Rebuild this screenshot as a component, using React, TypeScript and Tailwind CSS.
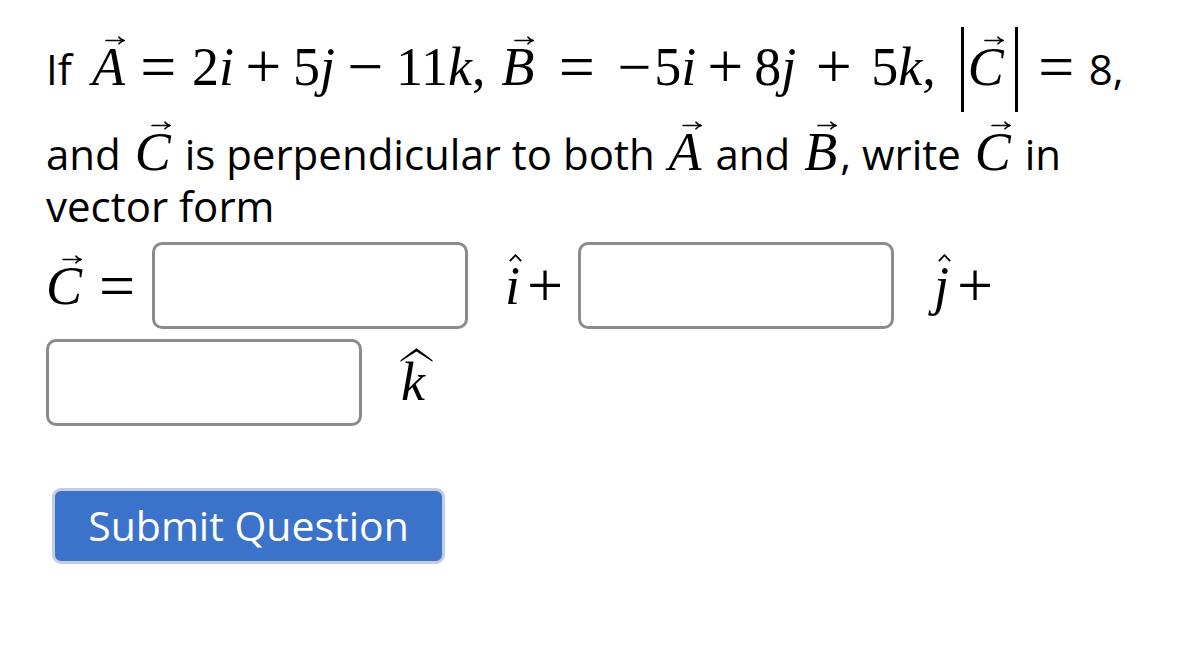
import React from 'react';

const TEXT = "font-['Open_Sans',sans-serif]";
const MATH = "font-['Liberation_Serif','Times_New_Roman',serif]";

function Arrow() {
  return (
    <svg
      className="absolute right-0 top-[-4px]"
      width="20"
      height="9"
      viewBox="0 0 20 9"
      fill="none"
      stroke="black"
      strokeWidth="1.6"
      strokeLinecap="round"
    >
      <path d="M1 4.5H18.5" />
      <path d="M14 1.2Q15.8 3.6 19 4.5Q15.8 5.4 14 7.8" />
    </svg>
  );
}

function Vec({ v, className = '' }: { v: string; className?: string }) {
  return (
    <span className={`relative inline-block ${MATH} text-[54px] leading-none italic ${className}`}>
      {v}
      <Arrow />
    </span>
  );
}

function Hat({ v, className = '' }: { v: string; className?: string }) {
  return (
    <span className={`relative inline-block ${MATH} text-[54px] leading-none italic ${className}`}>
      {v}
      <svg className="absolute left-[4px] top-[-5px]" width="13" height="8" viewBox="0 0 13 8">
        <path d="M0.8 7.2L6.5 1.2L12.2 7.2" stroke="black" strokeWidth="1.8" fill="none" />
      </svg>
    </span>
  );
}

function WideHat({ v, className = '' }: { v: string; className?: string }) {
  return (
    <span className={`relative inline-block ${MATH} text-[54px] leading-none italic ${className}`}>
      {v}
      <svg className="absolute left-[-1px] top-[-8px]" width="33" height="15" viewBox="0 0 33 15">
        <path d="M0.5 13.2Q9 6.5 16.5 1.2Q24 6.5 32.5 13.2L32.5 14.8Q24 9 16.5 4.4Q9 9 0.5 14.8Z" fill="black" />
      </svg>
    </span>
  );
}

function V({ c }: { c: string }) {
  return <span className={`${MATH} text-[54px] italic`}>{c}</span>;
}

function N({ c, className = '' }: { c: string; className?: string }) {
  return <span className={`inline-block ${MATH} text-[54px] leading-none ${className}`}>{c}</span>;
}

function Op({ c, className = '' }: { c: string; className?: string }) {
  return (
    <span className={`inline-block text-center ${MATH} text-[64px] leading-none align-[-3px] ${className}`}>
      {c}
    </span>
  );
}

function Box({ className = '' }: { className?: string }) {
  return (
    <input
      type="text"
      className={`h-[87px] w-[316px] shrink-0 rounded-[10px] border-[3px] border-[#8b8b8b] bg-white outline-none ${className}`}
    />
  );
}

export default function App() {
  return (
    <div className="min-h-[667px] w-[1179px] bg-white pl-[46px] text-black">
      {/* question, first line */}
      <div className={`pt-[27px] ${TEXT} text-[42px] leading-none whitespace-nowrap`}>
        <span>If</span>
        <Vec v="A" className="ml-[20px]" />
        <Op c="=" className="w-[67px]" />
        <N c="2" />
        <V c="i" />
        <Op c="+" className="w-[59px]" />
        <N c="5" />
        <V c="j" />
        <Op c="−" className="w-[61px]" />
        <N c="11" />
        <V c="k" />
        <N c="," />
        <Vec v="B" className="ml-[16px]" />
        <Op c="=" className="ml-[2px] w-[81px]" />
        <span className={`inline-block ${MATH} text-[60px] leading-none align-[-2px]`}>−</span>
        <N c="5" className="ml-[3px]" />
        <V c="i" />
        <Op c="+" className="w-[58px]" />
        <N c="8" />
        <V c="j" />
        <Op c="+" className="w-[75px]" />
        <N c="5" />
        <V c="k" />
        <N c="," />
        <span className="ml-[25px] inline-block border-x-[3px] border-black pt-[13px] pr-[11px] pb-[18px] pl-[4px] leading-none">
          <Vec v="C" />
        </span>
        <Op c="=" className="ml-[6px] w-[65px]" />
        <span>8,</span>
      </div>

      <p className={`mt-[13px] ${TEXT} text-[42px] leading-[52px] whitespace-nowrap`}>
        and <Vec v="C" className="mx-[3px]" /> is perpendicular to both <Vec v="A" className="mx-[3px]" /> and{' '}
        <Vec v="B" className="mx-[3px]" />, write <Vec v="C" className="mx-[3px]" /> in
        <br />
        vector form
      </p>

      {/* answer fields */}
      <div className="mt-[10px] flex h-[87px] items-center">
        <Vec v="C" />
        <Op c="=" className="ml-[15px] w-[40px]" />
        <Box className="ml-[15px]" />
        <Hat v="i" className="ml-[37px]" />
        <Op c="+" className="ml-[5px] w-[40px]" />
        <Box className="ml-[13px]" />
        <Hat v="j" className="ml-[40px]" />
        <Op c="+" className="ml-[6px] w-[40px]" />
      </div>
      <div className="mt-[9px] flex h-[88px] items-center">
        <Box />
        <WideHat v="k" className="ml-[39px]" />
      </div>

      <button
        type="button"
        className={`mt-[62px] ml-[6px] flex h-[76px] w-[393px] items-center justify-center rounded-[9px] border-[3px] border-[#c3cde0] bg-[#3a73c9] ${TEXT} text-[41px] text-white`}
      >
        Submit Question
      </button>
    </div>
  );
}
